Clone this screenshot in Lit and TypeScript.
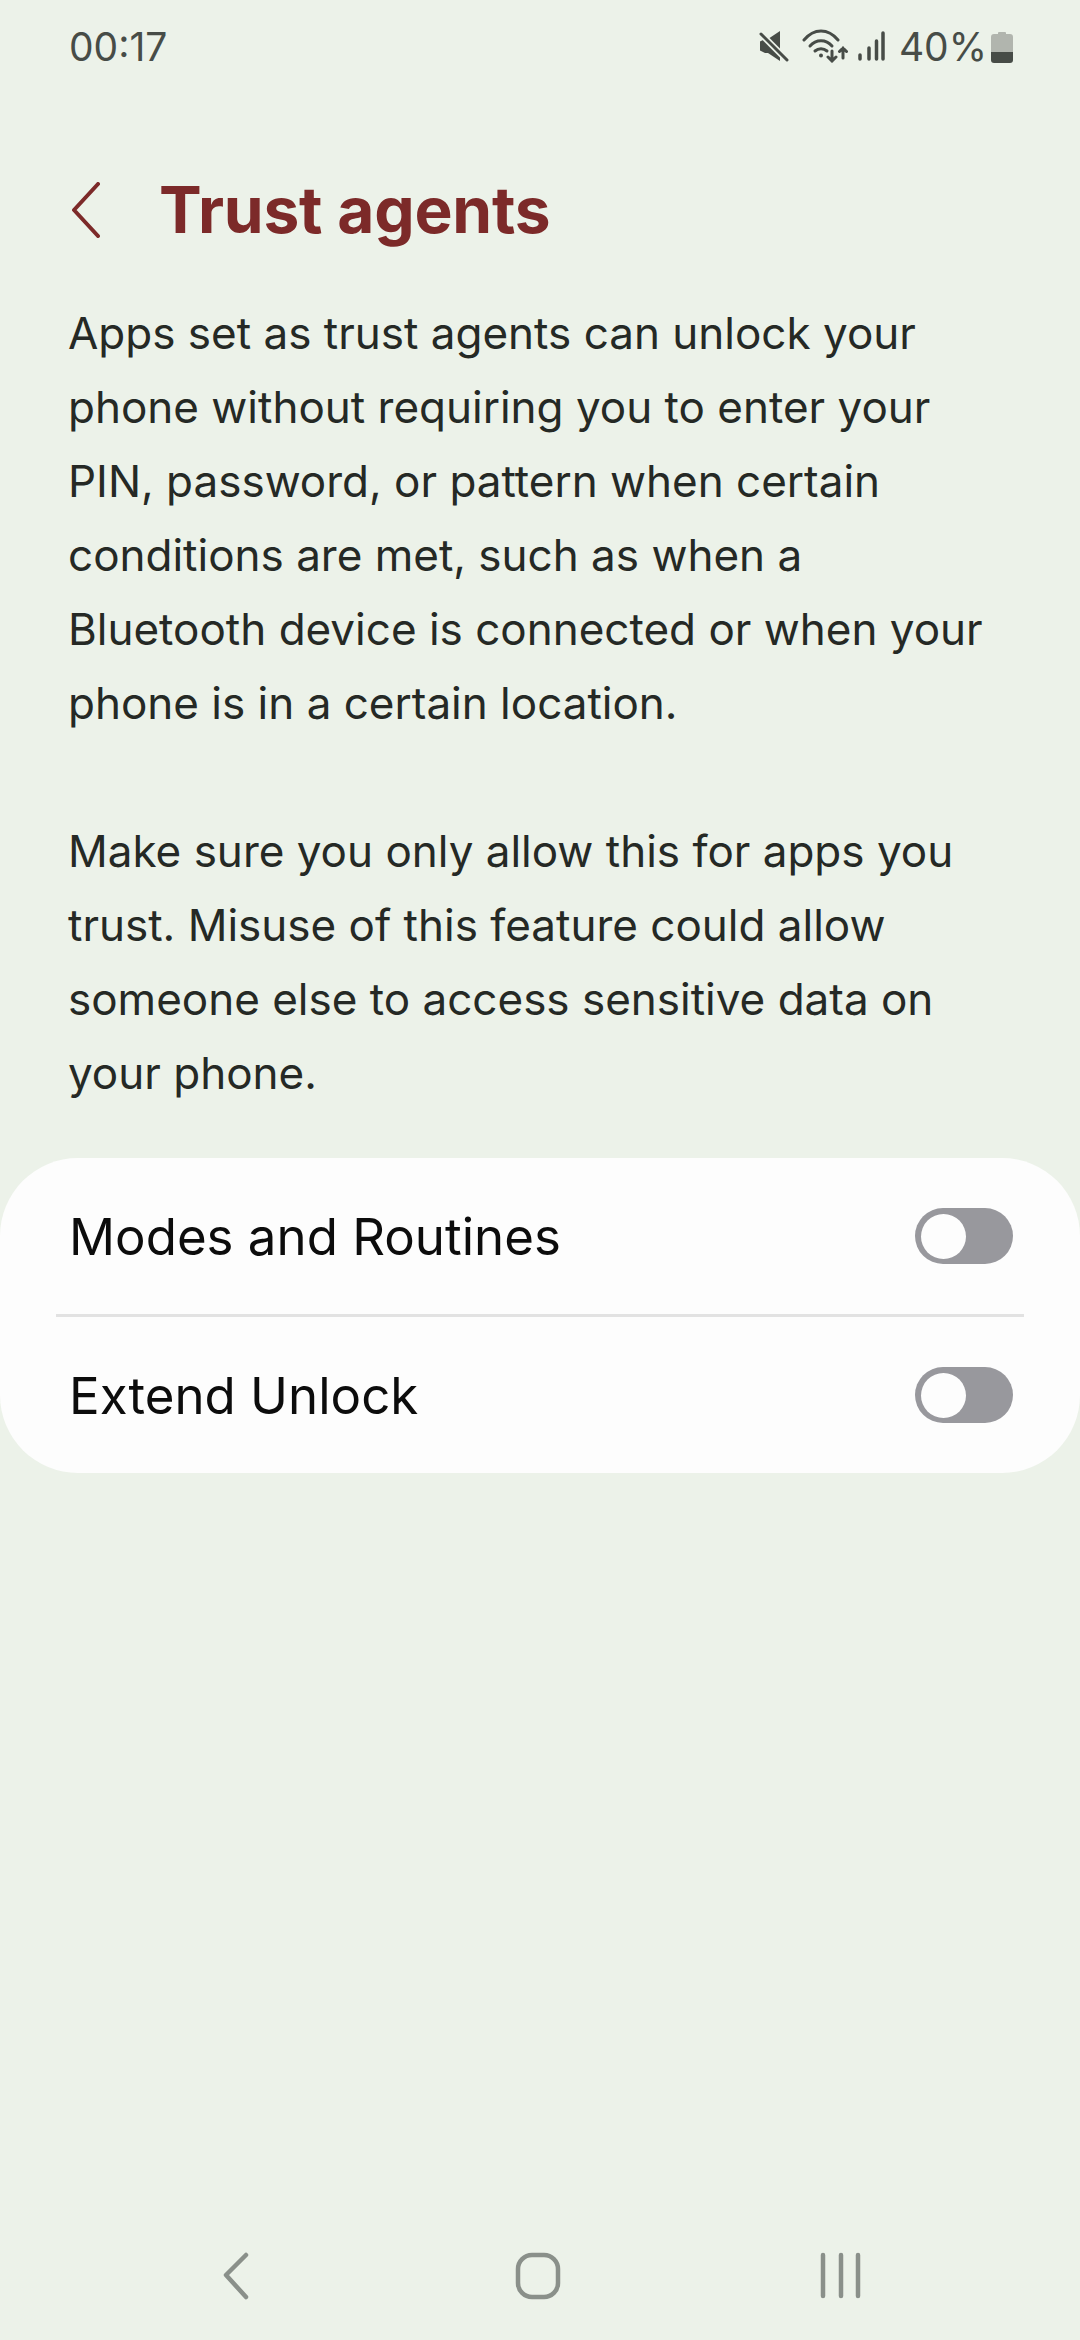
import { LitElement, css, html } from "lit";
import { customElement } from "lit/decorators.js";

const BODY_ONE = [
  "Apps set as trust agents can unlock your",
  "phone without requiring you to enter your",
  "PIN, password, or pattern when certain",
  "conditions are met, such as when a",
  "Bluetooth device is connected or when your",
  "phone is in a certain location.",
];

const BODY_TWO = [
  "Make sure you only allow this for apps you",
  "trust. Misuse of this feature could allow",
  "someone else to access sensitive data on",
  "your phone.",
];

@customElement("app-root")
export class AppRoot extends LitElement {
  static styles = css`
    :host {
      display: block;
    }

    .screen {
      width: 1080px;
      height: 2340px;
      background: #ecf2e9;
      font-family: Inter, Roboto, sans-serif;
      display: flex;
      flex-direction: column;
    }

    .status {
      height: 92px;
      padding: 0 67px 0 69px;
      display: flex;
      align-items: center;
      color: #474c47;
    }

    .time {
      font-size: 39px;
      flex: 1;
    }

    .status svg {
      display: block;
      flex: none;
    }

    .mute {
      margin-right: 13px;
    }

    .wifi {
      margin-right: 10px;
    }

    .signal {
      margin-right: 14px;
    }

    .percent {
      font-size: 39px;
      margin-right: 4px;
    }

    .battery {
      margin-top: 2px;
    }

    .header {
      height: 120px;
      margin-top: 58px;
      padding-left: 71px;
      display: flex;
      align-items: center;
      gap: 58px;
      color: #7c2a29;
    }

    .header svg {
      display: block;
    }

    h1 {
      margin: 0;
      font-size: 64px;
      font-weight: 700;
      line-height: 80px;
      letter-spacing: -0.2px;
    }

    .body {
      margin-top: 26px;
      padding: 0 68px;
      font-size: 44px;
      line-height: 74px;
      color: #252925;
    }

    .body p {
      margin: 0 0 74px;
      white-space: nowrap;
    }

    .body p:last-child {
      margin-bottom: 0;
    }

    .card {
      margin-top: 48px;
      background: #fdfdfd;
      border-radius: 78px;
      height: 315px;
      display: flex;
      flex-direction: column;
    }

    .row {
      flex: 1;
      padding: 0 67px 0 69px;
      display: flex;
      align-items: center;
      justify-content: space-between;
      font-size: 51px;
      color: #0c0c0c;
    }

    .divider {
      height: 3px;
      margin: 0 56px;
      background: #e2e2e2;
    }

    .toggle {
      width: 98px;
      height: 56px;
      border-radius: 28px;
      background: #98989d;
      padding: 5.5px;
      box-sizing: border-box;
    }

    .knob {
      width: 45px;
      height: 45px;
      border-radius: 50%;
      background: #fdfdfd;
    }

    .nav {
      margin-top: auto;
      height: 130px;
    }

    .nav svg {
      display: block;
    }
  `;

  private renderToggle(label: string) {
    return html`
      <div class="row">
        <span>${label}</span>
        <div class="toggle"><div class="knob"></div></div>
      </div>
    `;
  }

  render() {
    return html`
      <div class="screen">
        <div class="status">
          <span class="time">00:17</span>
          <svg class="mute" width="30" height="32" viewBox="0 0 30 32">
            <path d="M6 9 L1 11.5 V20.5 L6 23 H9 L21 31 V1 L9 9 Z" fill="#474c47" />
            <path d="M2 4 L28 30" stroke="#ecf2e9" stroke-width="6.500" />
            <path d="M2 4 L28 30" stroke="#474c47" stroke-width="3" stroke-linecap="round" />
          </svg>
          <svg class="wifi" width="46" height="34" viewBox="0 0 46 34" fill="none" stroke="#474c47" stroke-width="3" stroke-linecap="round">
            <path d="M2 11 C12 -1 26 -1 36 11" />
            <path d="M8 17 C14 10 24 10 30 17" />
            <path d="M13 22 C16.500 19 21.500 19 25 22" />
            <circle cx="19" cy="26.500" r="2" fill="#474c47" stroke="none" />
            <path d="M30 22 V32 M26 28 L30 32 L34 28" />
            <path d="M41 29 V19 M37.500 22.500 L41 19 L44.500 22.500" />
          </svg>
          <svg class="signal" width="27" height="30" viewBox="0 0 27 30" fill="none" stroke="#474c47" stroke-width="3.500" stroke-linecap="round">
            <path d="M2 28 V24 M11 28 V17 M18.500 28 V10 M25 28 V2" />
          </svg>
          <span class="percent">40%</span>
          <svg class="battery" width="22" height="32" viewBox="0 0 22 32">
            <path d="M7 2 Q7 1 8 1 H14 Q15 1 15 2 V3 H19 Q22 3 22 6 V21 H0 V6 Q0 3 3 3 H7 Z" fill="#b1b5ae" />
            <path d="M0 21 H22 V29 Q22 32 19 32 H3 Q0 32 0 29 Z" fill="#474c47" />
          </svg>
        </div>

        <div class="header">
          <svg width="30" height="56" viewBox="0 0 30 56" fill="none" stroke="#7c2a29" stroke-width="4" stroke-linecap="round" stroke-linejoin="round">
            <path d="M27 2 L3 28 L27 54" />
          </svg>
          <h1>Trust agents</h1>
        </div>

        <div class="body">
          <p>${BODY_ONE.map((line) => html`${line}<br />`)}</p>
          <p>${BODY_TWO.map((line) => html`${line}<br />`)}</p>
        </div>

        <div class="card">
          ${this.renderToggle("Modes and Routines")}
          <div class="divider"></div>
          ${this.renderToggle("Extend Unlock")}
        </div>

        <div class="nav">
          <svg width="1080" height="130" viewBox="0 0 1080 130" fill="none" stroke="#8a908a" stroke-width="4.500" stroke-linecap="round" stroke-linejoin="round">
            <path d="M246 45 L226 65 L246 87" />
            <rect x="518" y="45" width="40" height="42" rx="14" />
            <path d="M823 45 V86 M841 45 V86 M858 45 V86" />
          </svg>
        </div>
      </div>
    `;
  }
}
